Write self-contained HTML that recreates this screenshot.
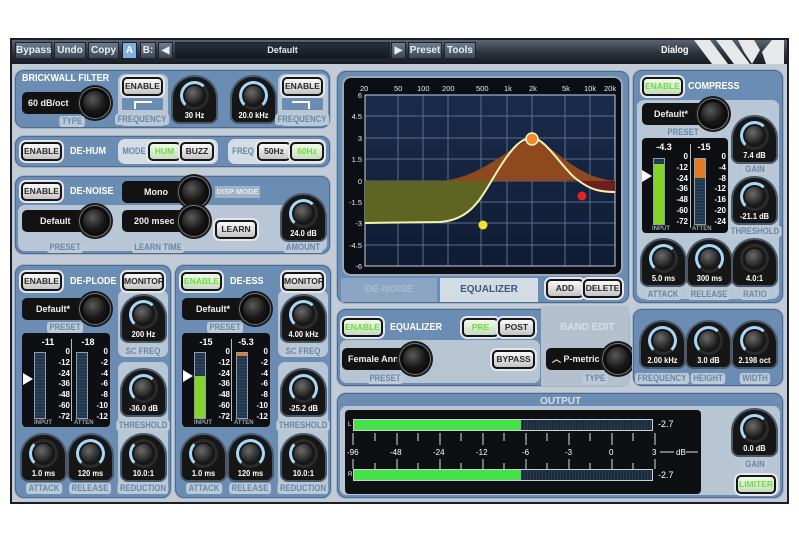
<!DOCTYPE html>
<html><head><meta charset="utf-8"><style>
*{margin:0;padding:0;box-sizing:border-box}
body{width:799px;height:533px;background:#fff;position:relative;overflow:hidden;font-family:"Liberation Sans",sans-serif}
div,span{position:absolute}
.fr{left:10px;top:38px;width:779px;height:466px;background:#c3ccd6;border:2px solid #1a1d22}
.tb{left:10px;top:38px;width:779px;height:26px;background:linear-gradient(#5a6573,#2b323b 60%,#1c2127);border:2px solid #1a1d22}
.tbt{top:42px;height:17px;background:linear-gradient(#6e7c8c,#3e4854);border:1px solid #1d232a;color:#e8edf2;font:bold 10px "Liberation Sans",sans-serif;text-align:center;line-height:15px}
.p{background:#6c8db3;border-radius:9px;box-shadow:inset 0 0 0 1px #4e6c90,0 0 0 1px #9fb3c9}
.in{background:#b8c6d5;border-radius:7px}
.t{color:#fff;font:bold 10px "Liberation Sans",sans-serif;white-space:nowrap;transform:scaleX(.9);transform-origin:left}
.l{color:#6a85a5;font:bold 9.5px "Liberation Sans",sans-serif;white-space:nowrap;transform:translateX(-50%) scaleX(.82);background:#bccad8;padding:0 3px;border-radius:3px;line-height:11px}
.bt{height:19px;background:linear-gradient(#fafafa,#c4c4c4);border:2px solid #151515;border-radius:5px;font:bold 8.5px "Liberation Sans",sans-serif;color:#2a2a2a;text-align:center;line-height:15px;box-shadow:0 0 0 2px #e4e8ec;overflow:hidden}
.g{color:#6fdc3c;background:linear-gradient(#f0faea,#c6dcc0)}
.k{width:43px;height:45px;background:#161616;border-radius:21px 21px 6px 6px;box-shadow:0 0 0 2px #4b5a6b}
.k s{position:absolute;left:7px;top:4px;width:29px;height:29px;border-radius:50%;border:3px solid #2b2b2b;border-top-color:#a8d6f6;border-left-color:#a8d6f6}
.k i{position:absolute;left:12px;top:9px;width:19px;height:19px;border-radius:50%;background:radial-gradient(circle at 40% 35%,#6b6b6b,#1b1b1b 70%)}
.k b{position:absolute;left:-4px;right:-4px;bottom:2px;text-align:center;color:#fff;font:bold 8.5px "Liberation Sans",sans-serif;white-space:nowrap;transform:scaleX(.88)}
.pf{height:22px;background:#121212;border-radius:5px;color:#f0f0f0;font:bold 9px "Liberation Sans",sans-serif;line-height:22px;padding-left:6px;white-space:nowrap;overflow:hidden}
.pk{width:30px;height:30px;border-radius:50%;background:radial-gradient(circle at 40% 35%,#5a5a5a,#151515 60%);border:3px solid #0d0d0d;box-shadow:0 0 0 1px #777,0 0 0 3px #1a1a1a}
.m{background:#0d0f12;border-radius:4px}
.bar{background:repeating-linear-gradient(#233649 0 2px,#2c4560 2px 3px);border:1px solid #8fa0b0}
.sc{color:#fff;font:bold 8px "Liberation Sans",sans-serif;text-align:right;line-height:10.8px;white-space:pre}
.mv{color:#fff;font:bold 9px "Liberation Sans",sans-serif;text-align:center}
.ml{color:#9aa3ad;font:bold 6px "Liberation Sans",sans-serif}
.tri{width:0;height:0;border-top:6px solid transparent;border-bottom:6px solid transparent;border-left:10px solid #fff}
</style></head><body>
<div class="fr"></div>
<div class="tb"></div>
<div class="tbt" style="left:15px;width:37px">Bypass</div>
<div class="tbt" style="left:54px;width:32px">Undo</div>
<div class="tbt" style="left:88px;width:31px">Copy</div>
<div class="tbt" style="left:122px;width:15px;background:#7fb1df;color:#fff">A</div>
<div class="tbt" style="left:140px;width:16px">B:</div>
<div class="tbt" style="left:158px;width:15px">◀</div>
<div class="tbt" style="left:175px;width:215px;background:linear-gradient(#27313c,#111820);font-size:9px;color:#dfe6ee">Default</div>
<div class="tbt" style="left:391px;width:15px">▶</div>
<div class="tbt" style="left:408px;width:34px">Preset</div>
<div class="tbt" style="left:444px;width:32px">Tools</div>
<div class="t" style="left:661px;top:45px;font-size:10px">Dialog</div>
<svg style="position:absolute;left:694px;top:40px" width="94" height="24"><g fill="#e6e8ea"><polygon points="0,0 16,0 34,24 18,24"/><polygon points="22,0 38,0 56,24 40,24"/><polygon points="44,0 60,0 66,10 58,24 50,12"/><polygon points="68,12 78,0 90,0 90,24 72,24"/></g></svg>

<!-- BRICKWALL -->
<div class="p" style="left:15px;top:70px;width:315px;height:58px"></div>
<div class="t" style="left:22px;top:73px">BRICKWALL FILTER</div>
<div class="pf" style="left:22px;top:92px;width:78px">60 dB/oct</div>
<div class="pk" style="left:80px;top:88px"></div>
<div class="l" style="left:72px;top:116px">TYPE</div>
<div class="in" style="left:118px;top:74px;width:50px;height:52px"></div>
<div class="bt" style="left:122px;top:77px;width:41px">ENABLE</div>
<div style="left:122px;top:98px;width:41px;height:12px;background:#6c8db3"><span style="left:12px;top:3px;width:18px;height:8px;border-left:2px solid #fff;border-top:2px solid #fff"></span></div>
<div class="l" style="left:142px;top:114px">FREQUENCY</div>
<div class="k" style="left:173px;top:77px"><s></s><i></i><b>30 Hz</b></div>
<div class="k" style="left:232px;top:77px"><s style="border-right-color:#a8d6f6"></s><i></i><b>20.0 kHz</b></div>
<div class="in" style="left:278px;top:74px;width:50px;height:52px"></div>
<div class="bt" style="left:282px;top:77px;width:41px">ENABLE</div>
<div style="left:282px;top:98px;width:41px;height:12px;background:#6c8db3"><span style="left:10px;top:3px;width:18px;height:8px;border-right:2px solid #fff;border-top:2px solid #fff"></span></div>
<div class="l" style="left:302px;top:114px">FREQUENCY</div>

<!-- DE-HUM -->
<div class="p" style="left:15px;top:136px;width:315px;height:31px"></div>
<div class="bt" style="left:21px;top:142px;width:41px">ENABLE</div>
<div class="t" style="left:70px;top:146px">DE-HUM</div>
<div class="in" style="left:118px;top:139px;width:100px;height:25px;background:#d4dce5"></div>
<div class="l" style="left:134px;top:146px;background:none">MODE</div>
<div class="bt g" style="left:148px;top:142px;width:33px">HUM</div>
<div class="bt" style="left:180px;top:142px;width:34px">BUZZ</div>
<div class="in" style="left:228px;top:139px;width:98px;height:25px;background:#d4dce5"></div>
<div class="l" style="left:243px;top:146px;background:none">FREQ</div>
<div class="bt" style="left:257px;top:142px;width:34px">50Hz</div>
<div class="bt g" style="left:290px;top:142px;width:34px">60Hz</div>

<!-- DE-NOISE -->
<div class="p" style="left:15px;top:176px;width:315px;height:78px"></div>
<div class="in" style="left:18px;top:205px;width:309px;height:46px"></div>
<div class="bt" style="left:21px;top:182px;width:41px">ENABLE</div>
<div class="t" style="left:70px;top:186px">DE-NOISE</div>
<div class="pf" style="left:122px;top:181px;width:78px;padding-left:22px">Mono</div>
<div class="pk" style="left:179px;top:177px"></div>
<div style="left:215px;top:186px;width:45px;height:12px;background:#9fb2c6;color:#e6edf4;font:bold 7.5px 'Liberation Sans',sans-serif;text-align:center;line-height:12px">DISP MODE</div>
<div class="pf" style="left:22px;top:210px;width:78px;padding-left:18px">Default</div>
<div class="pk" style="left:80px;top:206px"></div>
<div class="l" style="left:65px;top:242px">PRESET</div>
<div class="pf" style="left:122px;top:210px;width:78px;padding-left:12px">200 msec</div>
<div class="pk" style="left:179px;top:206px"></div>
<div class="l" style="left:158px;top:242px">LEARN TIME</div>
<div class="bt" style="left:215px;top:220px;width:42px">LEARN</div>
<div class="k" style="left:282px;top:195px"><s></s><i></i><b>24.0 dB</b></div>
<div class="l" style="left:303px;top:242px">AMOUNT</div>

<!-- DE-PLODE -->
<div class="p" style="left:15px;top:265px;width:156px;height:233px"></div>
<div class="in" style="left:118px;top:290px;width:50px;height:67px"></div>
<div class="in" style="left:118px;top:362px;width:50px;height:132px"></div>
<div class="bt" style="left:21px;top:272px;width:41px">ENABLE</div>
<div class="t" style="left:70px;top:276px">DE-PLODE</div>
<div class="bt" style="left:122px;top:272px;width:42px">MONITOR</div>
<div class="pf" style="left:22px;top:298px;width:78px;padding-left:14px">Default*</div>
<div class="pk" style="left:80px;top:294px"></div>
<div class="l" style="left:65px;top:322px">PRESET</div>
<div class="m" style="left:22px;top:333px;width:88px;height:94px">
 <span class="mv" style="left:14px;top:4px;width:24px">-11</span><span class="mv" style="left:54px;top:4px;width:24px">-18</span>
 <span class="bar" style="left:12px;top:19px;width:12px;height:67px"></span>
 <span class="sc" style="left:24px;top:14px;width:24px">0
-12
-24
-36
-48
-60
-72</span>
 <span style="left:49px;top:6px;width:1px;height:82px;background:#bbb"></span>
 <span class="bar" style="left:54px;top:19px;width:12px;height:67px"></span>
 <span class="sc" style="left:64px;top:14px;width:22px">0
-2
-4
-6
-8
-10
-12</span>
 <span class="ml" style="left:12px;top:87px">INPUT</span><span class="ml" style="left:52px;top:87px">ATTEN</span>
 <span class="tri" style="left:1px;top:40px"></span>
</div>
<div class="k" style="left:122px;top:296px"><s></s><i></i><b>200 Hz</b></div>
<div class="l" style="left:143px;top:346px">SC FREQ</div>
<div class="k" style="left:122px;top:370px"><s></s><i></i><b>-36.0 dB</b></div>
<div class="l" style="left:143px;top:420px">THRESHOLD</div>
<div class="k" style="left:22px;top:435px"><s style="border-top-color:#2b2b2b"></s><i></i><b>1.0 ms</b></div>
<div class="k" style="left:69px;top:435px"><s style="border-right-color:#a8d6f6"></s><i></i><b>120 ms</b></div>
<div class="k" style="left:122px;top:435px"><s style="border-top-color:#2b2b2b"></s><i></i><b>10.0:1</b></div>
<div class="l" style="left:44px;top:483px">ATTACK</div>
<div class="l" style="left:90px;top:483px">RELEASE</div>
<div class="l" style="left:143px;top:483px">REDUCTION</div>

<!-- DE-ESS -->
<div class="p" style="left:175px;top:265px;width:156px;height:233px"></div>
<div class="in" style="left:278px;top:290px;width:50px;height:67px"></div>
<div class="in" style="left:278px;top:362px;width:50px;height:132px"></div>
<div class="bt g" style="left:181px;top:272px;width:41px">ENABLE</div>
<div class="t" style="left:230px;top:276px">DE-ESS</div>
<div class="bt" style="left:282px;top:272px;width:42px">MONITOR</div>
<div class="pf" style="left:182px;top:298px;width:78px;padding-left:14px">Default*</div>
<div class="pk" style="left:240px;top:294px"></div>
<div class="l" style="left:225px;top:322px">PRESET</div>
<div class="m" style="left:182px;top:333px;width:88px;height:94px">
 <span class="mv" style="left:12px;top:4px;width:24px">-15</span><span class="mv" style="left:52px;top:4px;width:24px">-5.3</span>
 <span class="bar" style="left:12px;top:19px;width:12px;height:67px"></span>
 <span style="left:13px;top:43px;width:10px;height:42px;background:#86d42a"></span>
 <span class="sc" style="left:24px;top:14px;width:24px">0
-12
-24
-36
-48
-60
-72</span>
 <span style="left:49px;top:6px;width:1px;height:82px;background:#bbb"></span>
 <span class="bar" style="left:54px;top:19px;width:12px;height:67px"></span>
 <span style="left:55px;top:20px;width:10px;height:3px;background:#e47b22"></span>
 <span class="sc" style="left:64px;top:14px;width:22px">0
-2
-4
-6
-8
-10
-12</span>
 <span class="ml" style="left:12px;top:87px">INPUT</span><span class="ml" style="left:52px;top:87px">ATTEN</span>
 <span class="tri" style="left:1px;top:37px"></span>
</div>
<div class="k" style="left:282px;top:296px"><s></s><i></i><b>4.00 kHz</b></div>
<div class="l" style="left:303px;top:346px">SC FREQ</div>
<div class="k" style="left:282px;top:370px"><s style="border-right-color:#a8d6f6"></s><i></i><b>-25.2 dB</b></div>
<div class="l" style="left:303px;top:420px">THRESHOLD</div>
<div class="k" style="left:182px;top:435px"><s style="border-top-color:#2b2b2b"></s><i></i><b>1.0 ms</b></div>
<div class="k" style="left:229px;top:435px"><s style="border-right-color:#a8d6f6"></s><i></i><b>120 ms</b></div>
<div class="k" style="left:282px;top:435px"><s style="border-top-color:#2b2b2b"></s><i></i><b>10.0:1</b></div>
<div class="l" style="left:204px;top:483px">ATTACK</div>
<div class="l" style="left:250px;top:483px">RELEASE</div>
<div class="l" style="left:303px;top:483px">REDUCTION</div>

<!-- EQ GRAPH -->
<div class="p" style="left:337px;top:71px;width:292px;height:232px"></div>
<div style="left:342px;top:76px;width:281px;height:200px;background:#0b0e14;border-radius:9px;border:2px solid #9aa8b8"></div>
<div style="left:365px;top:95px;width:250px;height:171px;background:linear-gradient(#1a2b4a,#0f1c33)"></div>
<svg style="position:absolute;left:0;top:0" width="799" height="533">
<g stroke="#5a6f92" stroke-width="1">
<line x1="398" y1="95" x2="398" y2="266"/><line x1="423" y1="95" x2="423" y2="266"/><line x1="448" y1="95" x2="448" y2="266"/><line x1="481" y1="95" x2="481" y2="266"/><line x1="507" y1="95" x2="507" y2="266"/><line x1="532" y1="95" x2="532" y2="266"/><line x1="565" y1="95" x2="565" y2="266"/><line x1="590" y1="95" x2="590" y2="266"/>
<line x1="365" y1="116" x2="615" y2="116"/><line x1="365" y1="138" x2="615" y2="138"/><line x1="365" y1="159" x2="615" y2="159"/><line x1="365" y1="181" x2="615" y2="181"/><line x1="365" y1="202" x2="615" y2="202"/><line x1="365" y1="223" x2="615" y2="223"/><line x1="365" y1="245" x2="615" y2="245"/>
</g>
<rect x="365" y="95" width="250" height="171" fill="none" stroke="#c8d2e0"/>
<path d="M440,181 C480,178 505,150 532,138 C560,150 575,177 615,181 Z" fill="#8e4a1e"/>
<path d="M365,181 L497,181 L495,175 C480,200 470,220 440,222 L365,223 Z" fill="#5e6422"/>
<path d="M565,181 L615,181 L615,192 C600,192 590,190 575,180 Z" fill="#6e1d22"/>
<path d="M365,223 L440,222 C470,220 480,200 495,175 C510,150 520,138 532,138 C545,138 560,165 575,178 C590,190 600,192 615,192" fill="none" stroke="#f4f2b0" stroke-width="2"/>
<circle cx="532" cy="139" r="6" fill="#f08a2a" stroke="#fff3d0" stroke-width="1.5"/>
<circle cx="483" cy="225" r="4.5" fill="#f2e22a"/>
<circle cx="582" cy="196" r="4.5" fill="#e02424"/>
<g fill="#e8eef5" font-family="Liberation Sans" font-size="7.5">
<text x="360" y="91">20</text><text x="394" y="91">50</text><text x="417" y="91">100</text><text x="442" y="91">200</text><text x="476" y="91">500</text><text x="504" y="91">1k</text><text x="529" y="91">2k</text><text x="562" y="91">5k</text><text x="584" y="91">10k</text><text x="604" y="91">20k</text>
<g text-anchor="end"><text x="362" y="98">6</text><text x="362" y="119">4.5</text><text x="362" y="141">3</text><text x="362" y="162">1.5</text><text x="362" y="184">0</text><text x="362" y="205">-1.5</text><text x="362" y="226">-3</text><text x="362" y="248">-4.5</text><text x="362" y="269">-6</text></g>
</g>
</svg>
<div style="left:341px;top:278px;width:96px;height:24px;background:#8ba5c2;color:#a8bcd2;font:bold 10px 'Liberation Sans',sans-serif;text-align:center;line-height:24px">DE-NOISE</div>
<div style="left:440px;top:278px;width:98px;height:24px;background:#d3dbe4;color:#3d5878;font:bold 10px 'Liberation Sans',sans-serif;text-align:center;line-height:24px">EQUALIZER</div>
<div class="bt" style="left:546px;top:279px;width:38px">ADD</div>
<div class="bt" style="left:583px;top:279px;width:39px">DELETE</div>

<!-- COMPRESS -->
<div class="p" style="left:633px;top:70px;width:150px;height:233px"></div>
<div class="in" style="left:637px;top:100px;width:142px;height:199px"></div>
<div class="bt g" style="left:642px;top:77px;width:41px">ENABLE</div>
<div class="t" style="left:688px;top:81px">COMPRESS</div>
<div class="pf" style="left:642px;top:103px;width:76px;padding-left:12px">Default*</div>
<div class="pk" style="left:698px;top:99px"></div>
<div class="l" style="left:683px;top:127px">PRESET</div>
<div class="m" style="left:642px;top:138px;width:86px;height:95px">
 <span class="mv" style="left:10px;top:4px;width:24px">-4.3</span><span class="mv" style="left:50px;top:4px;width:24px">-15</span>
 <span class="bar" style="left:11px;top:20px;width:12px;height:67px"></span>
 <span style="left:12px;top:26px;width:10px;height:60px;background:#86d42a"></span>
 <span class="sc" style="left:22px;top:14px;width:24px">0
-12
-24
-36
-48
-60
-72</span>
 <span style="left:48px;top:6px;width:1px;height:84px;background:#bbb"></span>
 <span class="bar" style="left:52px;top:20px;width:12px;height:67px"></span>
 <span style="left:53px;top:21px;width:10px;height:19px;background:#e47b22"></span>
 <span class="sc" style="left:62px;top:14px;width:22px">0
-4
-8
-12
-16
-20
-24</span>
 <span class="ml" style="left:10px;top:88px">INPUT</span><span class="ml" style="left:50px;top:88px">ATTEN</span>
 <span class="tri" style="left:0px;top:32px"></span>
</div>
<div class="k" style="left:733px;top:117px"><s></s><i></i><b>7.4 dB</b></div>
<div class="l" style="left:755px;top:164px">GAIN</div>
<div class="k" style="left:733px;top:178px"><s></s><i></i><b>-21.1 dB</b></div>
<div class="l" style="left:755px;top:226px">THRESHOLD</div>
<div class="k" style="left:642px;top:240px"><s></s><i></i><b>5.0 ms</b></div>
<div class="k" style="left:688px;top:240px"><s style="border-right-color:#a8d6f6"></s><i></i><b>300 ms</b></div>
<div class="k" style="left:733px;top:240px"><s style="border-top-color:#2b2b2b;border-left-color:#2b2b2b"></s><i></i><b>4.0:1</b></div>
<div class="l" style="left:663px;top:289px">ATTACK</div>
<div class="l" style="left:709px;top:289px">RELEASE</div>
<div class="l" style="left:755px;top:289px">RATIO</div>

<!-- EQ CONTROLS -->
<div class="p" style="left:337px;top:309px;width:292px;height:77px"></div>
<div class="in" style="left:340px;top:340px;width:200px;height:43px;background:#b7c4d2"></div>
<div style="left:541px;top:306px;width:88px;height:80px;background:#b4c0cd"></div>
<div class="bt g" style="left:342px;top:318px;width:41px">ENABLE</div>
<div class="t" style="left:390px;top:322px">EQUALIZER</div>
<div class="bt g" style="left:462px;top:318px;width:37px">PRE</div>
<div class="bt" style="left:498px;top:318px;width:37px">POST</div>
<div class="pf" style="left:342px;top:348px;width:78px">Female Ann...</div>
<div class="pk" style="left:400px;top:344px"></div>
<div class="l" style="left:385px;top:373px">PRESET</div>
<div class="bt" style="left:492px;top:350px;width:43px">BYPASS</div>
<div style="left:560px;top:322px;color:#d6dee8;font:bold 10px 'Liberation Sans',sans-serif">BAND EDIT</div>
<div class="pf" style="left:546px;top:348px;width:76px">︿ P-metric</div>
<div class="pk" style="left:603px;top:344px"></div>
<div class="l" style="left:595px;top:373px">TYPE</div>
<div class="p" style="left:633px;top:309px;width:150px;height:77px"></div>
<div class="k" style="left:641px;top:322px"><s style="border-right-color:#a8d6f6"></s><i></i><b>2.00 kHz</b></div>
<div class="k" style="left:687px;top:322px"><s></s><i></i><b>3.0 dB</b></div>
<div class="k" style="left:733px;top:322px"><s></s><i></i><b>2.198 oct</b></div>
<div class="l" style="left:662px;top:373px">FREQUENCY</div>
<div class="l" style="left:708px;top:373px">HEIGHT</div>
<div class="l" style="left:755px;top:373px">WIDTH</div>

<!-- OUTPUT -->
<div class="p" style="left:337px;top:393px;width:446px;height:105px"></div>
<div class="in" style="left:340px;top:406px;width:440px;height:89px;background:#b8c5d3"></div>
<div style="left:540px;top:396px;color:#d6dee8;font:bold 10px 'Liberation Sans',sans-serif">OUTPUT</div>
<div class="m" style="left:345px;top:410px;width:356px;height:84px"></div>
<div style="left:353px;top:419px;width:300px;height:12px;border:1px solid #c8d0d8;background:repeating-linear-gradient(90deg,#1d2c3c 0 2px,#2a3c50 2px 3px)"></div>
<div style="left:354px;top:420px;width:167px;height:10px;background:#48e04a"></div>
<div style="left:353px;top:469px;width:300px;height:12px;border:1px solid #c8d0d8;background:repeating-linear-gradient(90deg,#1d2c3c 0 2px,#2a3c50 2px 3px)"></div>
<div style="left:354px;top:470px;width:167px;height:10px;background:#48e04a"></div>
<svg style="position:absolute;left:345px;top:410px" width="356" height="84"><g stroke="#ddd" stroke-width="1">
<path d="M8,23v12M30,23v8M52,23v12M73,23v8M95,23v12M116,23v8M138,23v12M159,23v8M181,23v12M202,23v8M224,23v12M245,23v8M267,23v12M288,23v8M310,23v12M8,49v10M30,53v6M52,49v10M73,53v6M95,49v10M116,53v6M138,49v10M159,53v6M181,49v10M202,53v6M224,49v10M245,53v6M267,49v10M288,53v6M310,49v10"/>
<path d="M315,42h14M341,42h12"/></g>
<g fill="#fff" font-family="Liberation Sans" font-size="8"><text x="3" y="16" font-size="6">L</text><text x="3" y="66" font-size="6">R</text>
<text x="2" y="45">-96</text><text x="45" y="45">-48</text><text x="88" y="45">-24</text><text x="131" y="45">-12</text><text x="177" y="45">-6</text><text x="220" y="45">-3</text><text x="264" y="45">0</text><text x="307" y="45">3</text><text x="331" y="45">dB</text>
<text x="313" y="17" font-size="9">-2.7</text><text x="313" y="68" font-size="9">-2.7</text></g></svg>
<div class="k" style="left:733px;top:410px"><s></s><i></i><b>0.0 dB</b></div>
<div class="l" style="left:755px;top:459px">GAIN</div>
<div class="bt g" style="left:736px;top:475px;width:40px">LIMITER</div>
</body></html>
